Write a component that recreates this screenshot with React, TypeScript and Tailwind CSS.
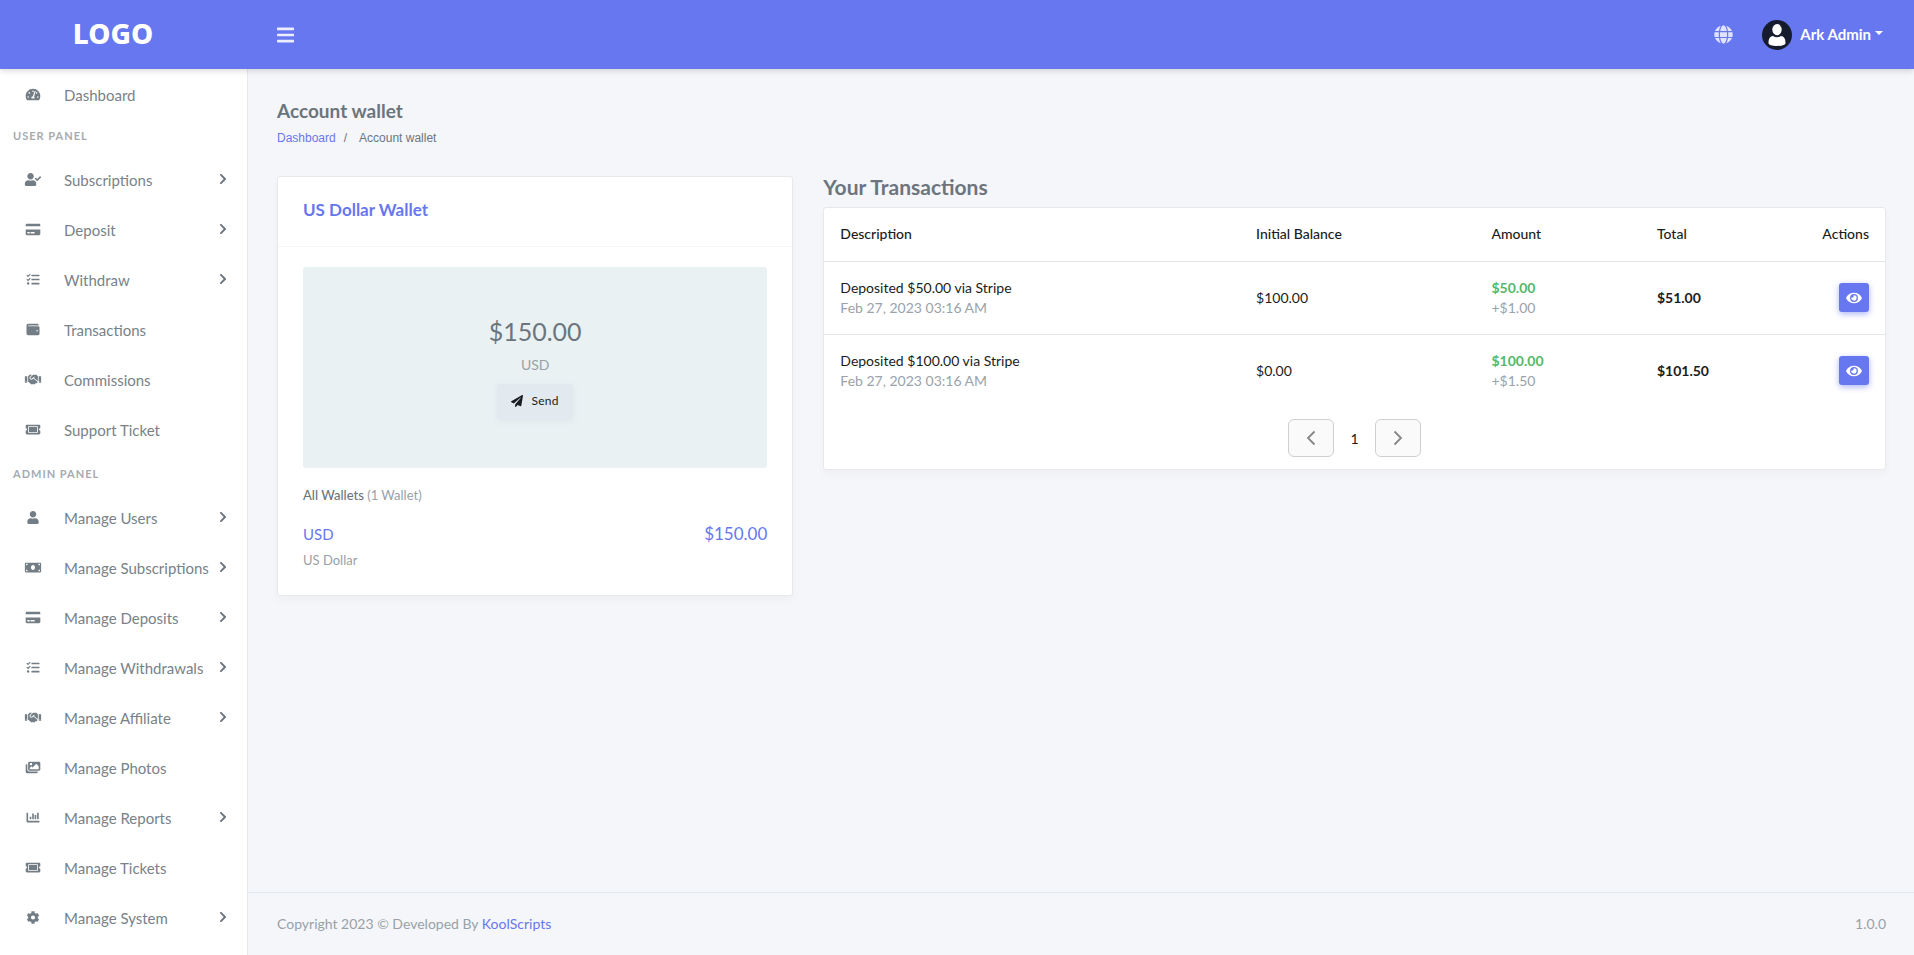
import type { ReactNode } from "react";
import {
  FaBars,
  FaChartBar,
  FaChevronRight,
  FaCog,
  FaCreditCard,
  FaEye,
  FaGlobe,
  FaHandshake,
  FaImages,
  FaMoneyBill,
  FaPaperPlane,
  FaTachometerAlt,
  FaTasks,
  FaTicketAlt,
  FaUser,
  FaUserCheck,
  FaWallet,
} from "react-icons/fa";
import type { IconType } from "react-icons";

type NavItem = {
  label: string;
  icon: IconType;
  hasChildren?: boolean;
};

const NavLink = ({ item }: { item: NavItem }) => (
  <a
    href="#"
    className="flex h-[50px] items-center pl-6 pr-5 text-[15px] text-[#788288] first:h-[43px]"
  >
    <span className="shrink-0 pb-0.5 text-[#737d85]">
      <item.icon className="h-[13px] w-[18px]" />
    </span>
    <span className="ml-[22px] flex-1 whitespace-nowrap">{item.label}</span>
    {item.hasChildren && (
      <span className="pb-0.5 text-[#6c757d]">
        <FaChevronRight className="h-3 w-2" />
      </span>
    )}
  </a>
);

const NavHeading = ({ children }: { children: ReactNode }) => (
  <h2 className="flex h-[38px] items-center pl-[13px] text-[11px] font-bold uppercase tracking-[1px] text-[#a5abb1]">
    {children}
  </h2>
);

const Sidebar = () => (
  <aside className="w-[248px] shrink-0 border-r border-[#e6e8ee] bg-white pt-[5px]">
    <nav>
      <NavLink item={{ label: "Dashboard", icon: FaTachometerAlt }} />
      <NavHeading>User Panel</NavHeading>
      {userLinks.map((item) => (
        <NavLink key={item.label} item={item} />
      ))}
      <NavHeading>Admin Panel</NavHeading>
      {adminLinks.map((item) => (
        <NavLink key={item.label} item={item} />
      ))}
    </nav>
  </aside>
);

const Header = () => (
  <header className="relative z-10 flex h-[69px] items-center bg-[#6777ef] text-white shadow-[0_2px_6px_rgba(0,0,0,0.15)]">
    <a
      href="#"
      className="w-[248px] pb-1 pr-[22px] text-center font-['Noto_Sans',sans-serif] text-[28px] font-extrabold leading-none"
    >
      LOGO
    </a>
    <div className="flex flex-1 items-center justify-between pl-[29px] pr-[31px]">
      <button type="button" aria-label="Toggle menu">
        <FaBars className="h-5 w-[17px] text-[#eceeff]" />
      </button>

      <div className="flex items-center">
        <button type="button" aria-label="Language">
          <FaGlobe size={19} className="text-[#dfe3ff]" />
        </button>
        <button type="button" className="ml-[29px] flex items-center">
          <Avatar />
          <span className="ml-2 text-[15px] font-bold">Ark Admin</span>
          <span className="mb-1 ml-1 border-x-4 border-t-4 border-x-transparent border-t-white" />
        </button>
      </div>
    </div>
  </header>
);

const Avatar = () => (
  <svg width="30" height="30" viewBox="0 0 30 30" aria-hidden="true">
    <circle cx="15" cy="15" r="15" fill="#161b2e" />
    <ellipse cx="15" cy="9.6" rx="4.7" ry="5.6" fill="#fff" />
    <path
      d="M6.500 23c0-4.500 1.500-6.700 4.500-7 1.200.8 2.500 1.200 4 1.200s2.800-.4 4-1.200c3 .3 4.500 2.500 4.500 7 0 1.900-3.500 3-8.500 3s-8.500-1.100-8.500-3z"
      fill="#fff"
    />
  </svg>
);

const WalletCard = () => (
  <section className="rounded-[3px] border border-[#e6e8ec] bg-white shadow-[0_4px_8px_rgba(0,0,0,0.03)]">
    <div className="flex h-[70px] items-center border-b border-[#f6f6f6] px-[25px] pb-1">
      <h2 className="text-[17px] font-bold text-[#6777ef]">US Dollar Wallet</h2>
    </div>
    <div className="px-[25px] pb-[25px] pt-5">
      <div className="flex h-[201px] flex-col items-center justify-center rounded-[3px] bg-[#e9f1f3] pb-1">
        <p className="text-[25px] leading-9 text-[#6c757d]">$150.00</p>
        <p className="mt-1 text-[14px] leading-6 text-[#98a1a8]">USD</p>
        <button
          type="button"
          className="mt-[7px] flex h-[35px] items-center gap-2 rounded-[3px] bg-[#e2e9ef] px-[14px] text-[12px] tracking-wide text-[#191d21] shadow-[0_2px_6px_#dfe6ea]"
        >
          <FaPaperPlane size={12} />
          Send
        </button>
      </div>
      <p className="mt-[17px] text-[13px] leading-5 text-[#98a1a8]">
        <span className="font-medium text-[#6c757d]">All Wallets</span> (1 Wallet)
      </p>
      <div className="mt-[17px] flex items-center justify-between leading-6 text-[#6777ef]">
        <a href="#" className="text-[15px]">
          USD
        </a>
        <span className="text-[17px]">$150.00</span>
      </div>
      <p className="mt-1 text-[13px] leading-5 text-[#98a1a8]">US Dollar</p>
    </div>
  </section>
);

const PageButton = ({ label, path }: { label: string; path: string }) => (
  <button
    type="button"
    aria-label={label}
    className="flex h-[38px] w-[46px] items-center justify-center rounded-md border border-[#cfcfcf] bg-[#fafafa] text-[#868686]"
  >
    <svg width="10" height="16" viewBox="0 0 10 16" fill="none" stroke="currentColor" strokeWidth="1.8">
      <path d={path} />
    </svg>
  </button>
);

const TransactionsTable = () => (
  <section className="col-span-2">
    <h2 className="text-[21px] font-bold leading-[22px] text-[#6c757d]">
      Your Transactions
    </h2>
    <div className="mt-[9px] rounded-[3px] border border-[#e6e8ec] bg-white pb-3 shadow-[0_4px_8px_rgba(0,0,0,0.03)]">
      <table className="w-full table-fixed text-left text-[14px] leading-5 text-[#191d21]">
        <thead>
          <tr className="h-[53px] border-b border-[#e4e6e9]">
            <th className="w-[40.7%] pl-4 font-medium">Description</th>
            <th className="w-[22.2%] font-medium">Initial Balance</th>
            <th className="w-[15.6%] font-medium">Amount</th>
            <th className="font-medium">Total</th>
            <th className="pr-4 text-right font-medium">Actions</th>
          </tr>
        </thead>
        <tbody>
          {transactions.map((t) => (
            <tr key={t.description} className="h-[73px] border-b border-[#e4e6e9] last:border-b-0">
              <td className="pl-4">
                {t.description}
                <div className="text-[#9aa2aa]">{t.date}</div>
              </td>
              <td>{t.initial}</td>
              <td>
                <div className="font-bold text-[#54b968]">{t.amount}</div>
                <div className="text-[#9aa2aa]">{t.fee}</div>
              </td>
              <td className="font-bold">{t.total}</td>
              <td className="pr-4">
                <button
                  type="button"
                  aria-label="View transaction"
                  className="ml-auto flex h-[29px] w-[30px] items-center justify-center rounded-[3px] bg-[#6777ef] text-white shadow-[0_2px_6px_#acb5f6]"
                >
                  <FaEye className="h-[14px] w-4" />
                </button>
              </td>
            </tr>
          ))}
        </tbody>
      </table>
      <div className="mt-3 flex items-center justify-center text-[14px] text-[#191d21]">
        <PageButton label="Previous page" path="M8.500 1.500 2 8l6.500 6.500" />
        <span className="w-[41px] text-center">1</span>
        <PageButton label="Next page" path="M1.500 1.500 8 8l-6.500 6.500" />
      </div>
    </div>
  </section>
);

const App = () => {
  return (
    <div className="flex min-h-screen flex-col bg-[#f4f6fa] font-['Lato',sans-serif]">
      <Header />
      <div className="flex flex-1">
        <Sidebar />
        <div className="flex min-w-0 flex-1 flex-col">
          <main className="flex-1 pl-[29px] pr-7 pt-[30px]">
            <h1 className="text-[19px] font-bold leading-6 text-[#6c757d]">
              Account wallet
            </h1>
            <nav
              aria-label="Breadcrumb"
              className="mt-[5px] flex font-['Liberation_Sans',sans-serif] text-[12px] leading-5 text-[#6c757d]"
            >
              <a href="#" className="text-[#6777ef]">
                Dashboard
              </a>
              <span className="ml-2">/</span>
              <span className="ml-3">Account wallet</span>
            </nav>
            <div className="mt-7 grid grid-cols-3 items-start gap-[30px]">
              <WalletCard />
              <TransactionsTable />
            </div>
          </main>
          <footer className="flex h-[63px] items-center justify-between border-t border-[#e3eaef] pb-0.5 pl-[29px] pr-7 text-[14px] text-[#98a1a8]">
            <p>
              Copyright 2023 © Developed By{" "}
              <a href="#" className="text-[#6777ef]">
                KoolScripts
              </a>
            </p>
            <span>1.0.0</span>
          </footer>
        </div>
      </div>
    </div>
  );
};

export default App;

const userLinks: NavItem[] = [
  { label: "Subscriptions", icon: FaUserCheck, hasChildren: true },
  { label: "Deposit", icon: FaCreditCard, hasChildren: true },
  { label: "Withdraw", icon: FaTasks, hasChildren: true },
  { label: "Transactions", icon: FaWallet },
  { label: "Commissions", icon: FaHandshake },
  { label: "Support Ticket", icon: FaTicketAlt },
];

const adminLinks: NavItem[] = [
  { label: "Manage Users", icon: FaUser, hasChildren: true },
  { label: "Manage Subscriptions", icon: FaMoneyBill, hasChildren: true },
  { label: "Manage Deposits", icon: FaCreditCard, hasChildren: true },
  { label: "Manage Withdrawals", icon: FaTasks, hasChildren: true },
  { label: "Manage Affiliate", icon: FaHandshake, hasChildren: true },
  { label: "Manage Photos", icon: FaImages },
  { label: "Manage Reports", icon: FaChartBar, hasChildren: true },
  { label: "Manage Tickets", icon: FaTicketAlt },
  { label: "Manage System", icon: FaCog, hasChildren: true },
];

const transactions = [
  {
    description: "Deposited $50.00 via Stripe",
    date: "Feb 27, 2023 03:16 AM",
    initial: "$100.00",
    amount: "$50.00",
    fee: "+$1.00",
    total: "$51.00",
  },
  {
    description: "Deposited $100.00 via Stripe",
    date: "Feb 27, 2023 03:16 AM",
    initial: "$0.00",
    amount: "$100.00",
    fee: "+$1.50",
    total: "$101.50",
  },
];
